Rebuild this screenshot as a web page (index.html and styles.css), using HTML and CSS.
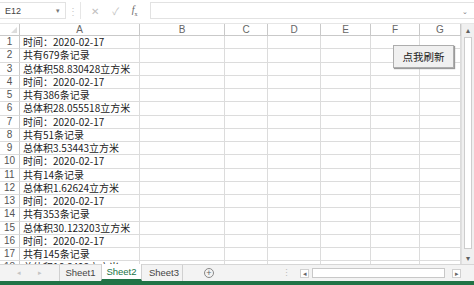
FILE: index.html
```html
<!DOCTYPE html>
<html lang="zh">
<head>
    <meta charset="UTF-8">
    <title>Sheet2</title>
    <link rel="stylesheet" href="styles.css">
</head>
<body>
    <div class="formula-bar">
        <div class="namebox">
            <span>E12</span>
            <span class="caret">&#9662;</span>
        </div>
        <div class="grip">&#8942;</div>
        <div class="fx-buttons">
            <span class="fx-btn">&#10005;</span>
            <span class="fx-btn">&#10003;</span>
            <span class="fx-btn fx"><i>f</i><sub>x</sub></span>
        </div>
        <div class="formula-input">
            <span class="caret">&#8964;</span>
        </div>
    </div>

    <div class="main">
        <div class="grid">
            <div class="row head">
                <div class="cell rh corner"></div>
                <div class="cell ca">A</div>
                <div class="cell cb">B</div>
                <div class="cell cc">C</div>
                <div class="cell cd">D</div>
                <div class="cell ce">E</div>
                <div class="cell cf">F</div>
                <div class="cell cg">G</div>
            </div>
            <div id="rows"></div>

            <!-- кнопка поверх ячеек -->
            <div class="refresh-btn">点我刷新</div>
        </div>
        <div class="vscroll">
            <div class="arrow">&#9652;</div>
            <div class="track"><div class="thumb"></div></div>
            <div class="arrow">&#9662;</div>
        </div>
    </div>

    <div class="tabbar">
        <div class="nav">
            <span>&#9666;</span>
            <span>&#9656;</span>
        </div>
        <div class="tab">Sheet1</div>
        <div class="tab active">Sheet2</div>
        <div class="tab">Sheet3</div>
        <div class="add-sheet">+</div>
        <div class="hscroll">
            <span class="grip-small">&#8942;</span>
            <span class="harrow">&#9666;</span>
            <div class="hthumb"></div>
            <span class="harrow">&#9656;</span>
        </div>
    </div>
    <div class="statusbar"></div>

    <script>
        const data = [
            '时间：2020-02-17',
            '共有679条记录',
            '总体积58.830428立方米',
            '时间：2020-02-17',
            '共有386条记录',
            '总体积28.055518立方米',
            '时间：2020-02-17',
            '共有51条记录',
            '总体积3.53443立方米',
            '时间：2020-02-17',
            '共有14条记录',
            '总体积1.62624立方米',
            '时间：2020-02-17',
            '共有353条记录',
            '总体积30.123203立方米',
            '时间：2020-02-17',
            '共有145条记录',
            '总体积16.8498立方米'
        ];
        const cols = ['cb', 'cc', 'cd', 'ce', 'cf', 'cg'];
        const rows = document.getElementById('rows');
        data.forEach(function(text, i) {
            // последняя строка видна только частично
            const cls = i === data.length - 1 ? 'row last' : 'row';
            let html = '<div class="' + cls + '"><div class="cell rh">' + (i + 1) + '</div>';
            html += '<div class="cell ca txt">' + text + '</div>';
            cols.forEach(function(c) {
                html += '<div class="cell ' + c + '"></div>';
            });
            rows.insertAdjacentHTML('beforeend', html + '</div>');
        });
    </script>
</body>
</html>
```

FILE: styles.css
```css
* {
    margin: 0;
    padding: 0;
    box-sizing: border-box;
}

body {
    width: 474px;
    height: 285px;
    overflow: hidden;
    background: #fff;
    font-family: "Noto Sans CJK SC", "Noto Sans", sans-serif;
    color: #222;
}

/* строка формул */
.formula-bar {
    height: 24px;
    display: flex;
    align-items: flex-start;
    padding-top: 2px;
    background: #fff;
    border-bottom: 1px solid #e6e6e6;
}

.namebox {
    width: 66px;
    height: 17px;
    border: 1px solid #e2e2e2;
    border-left: none;
    display: flex;
    align-items: center;
    justify-content: space-between;
    padding: 0 5px;
    font-family: "Liberation Sans", sans-serif;
    font-size: 9px;
    color: #444;
}

.caret {
    font-size: 7px;
    color: #777;
}

.grip {
    width: 14px;
    text-align: center;
    color: #c8c8c8;
    font-size: 10px;
    line-height: 17px;
}

.fx-buttons {
    width: 68px;
    height: 17px;
    display: flex;
    align-items: center;
    justify-content: space-around;
    padding: 0 4px;
    border-left: 1px solid #e6e6e6;
    color: #c0c0c0;
    font-size: 10px;
}

.fx-btn.fx {
    color: #666;
    font-family: "Liberation Serif", serif;
    font-size: 10px;
}

.fx-btn.fx sub {
    font-size: 6px;
}

.formula-input {
    flex: 1;
    height: 17px;
    margin-left: 2px;
    border: 1px solid #e2e2e2;
    border-right: none;
    display: flex;
    align-items: center;
    justify-content: flex-end;
    padding-right: 6px;
}

/* таблица */
.main {
    display: flex;
    height: 240px;
}

.grid {
    position: relative;
    flex: 1;
    overflow: hidden;
}

.row {
    display: flex;
    height: 13.25px;
}

.row.head {
    height: 12px;
}

.row.last {
    height: 3px;
    overflow: hidden;
}

.row.last .cell {
    height: 13px;
}

.cell {
    height: 100%;
    border-right: 1px solid #dcdcdc;
    border-bottom: 1px solid #dcdcdc;
    flex-shrink: 0;
    font-size: 10px;
    line-height: 12px;
    white-space: nowrap;
}

.head .cell {
    text-align: center;
    color: #666;
    font-family: "Liberation Sans", sans-serif;
    font-size: 10px;
    line-height: 11px;
    border-color: #c9c9c9;
    background: #fff;
}

.rh {
    width: 20px;
    text-align: center;
    color: #555;
    font-family: "Liberation Sans", sans-serif;
    font-size: 10px;
    border-right-color: #c9c9c9;
}

.corner {
    position: relative;
}

.corner::after {
    content: '';
    position: absolute;
    right: 2px;
    bottom: 2px;
    border-left: 6px solid transparent;
    border-bottom: 6px solid #dcdcdc;
}

.ca { width: 120px; }
.cb { width: 85px; }
.cc { width: 43px; }
.cd { width: 53px; }
.ce { width: 50px; }
.cf { width: 49px; }
.cg { width: 41px; }

.txt {
    padding-left: 3px;
    text-spacing-trim: space-all;
}

.refresh-btn {
    position: absolute;
    top: 21px;
    left: 393px;
    width: 61px;
    height: 23px;
    background: #f0f0f0;
    border: 1px solid #adadad;
    box-shadow: 1px 1px 1px #9a9a9a;
    font-size: 10.5px;
    line-height: 21px;
    text-align: center;
    color: #222;
}

.vscroll {
    width: 13px;
    display: flex;
    flex-direction: column;
    background: #f0f0f0;
    border-left: 1px solid #e0e0e0;
}

.vscroll .arrow {
    height: 12px;
    font-size: 8px;
    text-align: center;
    color: #606060;
    line-height: 12px;
}

.vscroll .track {
    flex: 1;
    padding: 1px 2px 3px;
}

.vscroll .thumb {
    height: 100%;
    background: #fff;
    border: 1px solid #cdcdcd;
}

/* вкладки листов */
.tabbar {
    height: 17px;
    display: flex;
    align-items: stretch;
    background: #f3f3f3;
    border-top: 1px solid #d6d6d6;
    font-family: "Liberation Sans", sans-serif;
    font-size: 9.5px;
    color: #444;
}

.nav {
    width: 60px;
    display: flex;
    justify-content: space-around;
    align-items: center;
    padding: 0 8px;
    color: #c4c4c4;
    font-size: 7px;
    border-right: 1px solid #d0d0d0;
}

.tab {
    width: 41px;
    text-align: center;
    line-height: 15px;
}

.tab.active {
    background: #fff;
    color: #217346;
    border-left: 1px solid #d0d0d0;
    border-right: 1px solid #d0d0d0;
    margin-top: -1px;
    border-bottom: 2px solid #217346;
}

.tab + .tab:not(.active) {
    border-right: 1px solid #d0d0d0;
    padding-left: 4px;
}

.add-sheet {
    width: 10px;
    height: 10px;
    margin: 3px 0 0 21px;
    border: 1px solid #888;
    border-radius: 50%;
    font-size: 9px;
    line-height: 8px;
    text-align: center;
    color: #666;
}

.hscroll {
    flex: 1;
    display: flex;
    align-items: center;
    padding: 0 13px 0 68px;
    gap: 3px;
}

.grip-small {
    color: #bbb;
    font-size: 9px;
    margin-right: 6px;
}

.harrow {
    color: #666;
    font-size: 7px;
    background: #fff;
    border: 1px solid #d0d0d0;
    width: 9px;
    height: 9px;
    line-height: 7px;
    text-align: center;
}

.hthumb {
    width: 133px;
    height: 10px;
    background: #fff;
    border: 1px solid #c8c8c8;
    margin-right: auto;
}

.statusbar {
    height: 4px;
    background: #217346;
}
```
